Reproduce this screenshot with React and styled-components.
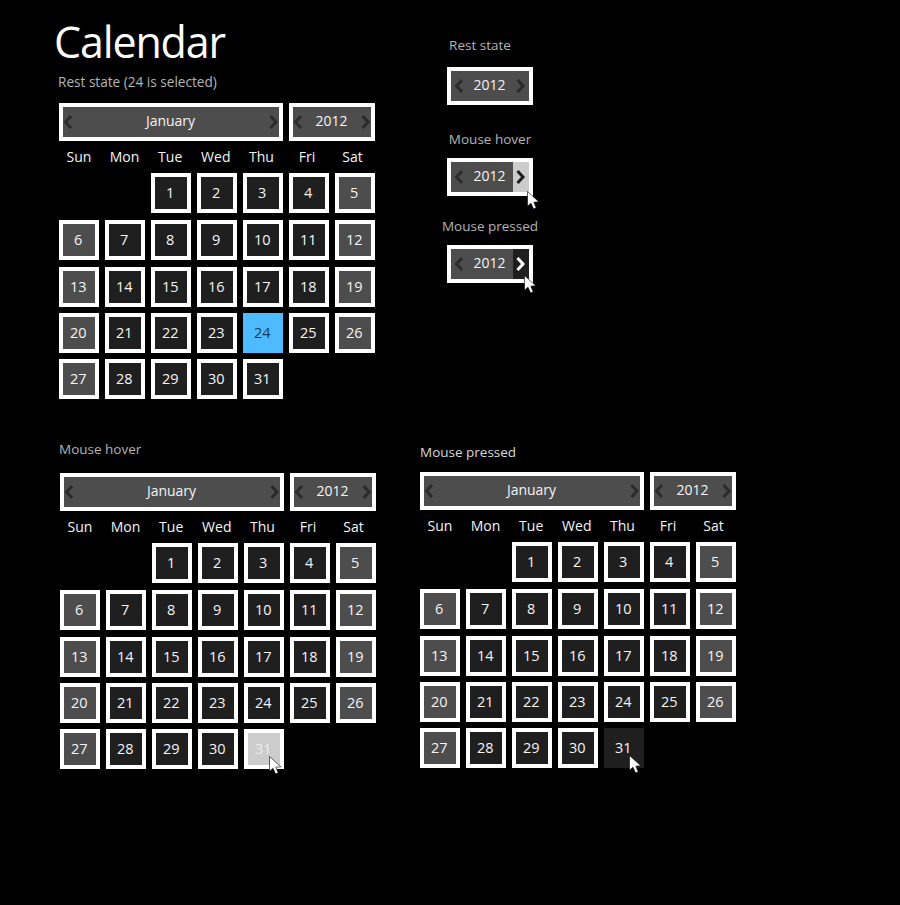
import React from "react";
import styled, { createGlobalStyle } from "styled-components";

const Global = createGlobalStyle`
  html, body { margin: 0; padding: 0; background: #000; }
  body { font-family: "Open Sans", "Noto Sans", "Liberation Sans", sans-serif; color: #fff; }
`;

const Page = styled.div`
  width: 900px;
  height: 905px;
  background: #000;
  overflow: hidden;
  display: flex;
  flex-direction: column;
`;
const TopRow = styled.section`
  display: flex;
  height: 439px;
  padding-left: 59px;
`;
const LeftColumn = styled.div`
  width: 388px;
  display: flex;
  flex-direction: column;
`;
const Title = styled.h1`
  margin: 14px 0 0 -5px;
  height: 56px;
  line-height: 56px;
  font-size: 43px;
  font-weight: 400;
  letter-spacing: -1.15px;
  color: #fff;
`;
const Caption = styled.div`
  height: 20px;
  line-height: 20px;
  font-size: 13.5px;
  color: ${p => p.$bright ? "#d8d8d8" : "#b4b4b4"};
  white-space: nowrap;
  margin-right: ${p => p.$shift || 0}px;
`;
const SubCaption = styled(Caption)`
  margin-bottom: 11px;
  margin-left: -1px;
  margin-top: 2px;
  font-size: 13.6px;
`;
const SpinnerColumn = styled.div`
  width: 86px;
  padding-top: 35px;
  display: flex;
  flex-direction: column;
  align-items: center;
`;
const SpinnerGroup = styled.div`
  display: flex;
  flex-direction: column;
  align-items: center;
  gap: ${p => p.$gap}px;
  margin-bottom: ${p => p.$after}px;
`;
const BottomRow = styled.section`
  display: flex;
  padding-left: 59px;
`;
const BottomColumn = styled.div`
  width: ${p => p.$width}px;
  display: flex;
  flex-direction: column;
  padding-top: ${p => p.$top}px;
`;
const CalendarBox = styled.div`
  width: 316px;
  margin-top: ${p => p.$top || 0}px;
  margin-left: ${p => p.$left || 0}px;
`;
const Header = styled.div`
  display: flex;
  gap: 6px;
`;
const Spinner = styled.div`
  position: relative;
  box-sizing: border-box;
  width: ${p => p.$wide ? 224 : 86}px;
  height: 38px;
  border: 4px solid #fff;
  background: #4d4d4d;
  display: flex;
  align-items: stretch;
`;
const SpinButton = styled.div`
  width: ${p => p.$wide ? 12 : 16}px;
  flex: none;
  display: flex;
  align-items: center;
  justify-content: ${p => p.$snug ? p.$snug : "center"};
  color: ${p => p.$state === "hover" ? "#1f1f1f" : p.$state === "pressed" ? "#fff" : "#2b2b2b"};
  background: ${p => p.$state === "hover" ? "#cccccc" : p.$state === "pressed" ? "#1f1f1f" : "transparent"};
`;
const SpinValue = styled.div`
  flex: 1;
  text-align: center;
  font-size: 14px;
  line-height: 28px;
  color: #f4f4f4;
  padding-right: 1px;
`;
const Weekdays = styled.div`
  display: grid;
  grid-template-columns: repeat(7, 40px);
  column-gap: 5.6px;
  height: 32px;
`;
const Weekday = styled.div`
  text-align: center;
  font-size: 14px;
  line-height: 32px;
  color: #f4f4f4;
`;
const Days = styled.div`
  display: grid;
  grid-template-columns: repeat(7, 40px);
  grid-template-rows: 47px 47px 46px 46px 40px;
  column-gap: 6px;
`;
const cellBg = { normal: "#1f1f1f", weekend: "#4d4d4d", selected: "#4ebaff", hover: "#cccccc", pressed: "#1f1f1f" };
const Day = styled.div`
  position: relative;
  box-sizing: border-box;
  height: 40px;
  grid-column: ${p => p.$col || "auto"};
  border: 4px solid ${p => (p.$kind === "selected" || p.$kind === "pressed") ? cellBg[p.$kind] : "#fff"};
  background: ${p => cellBg[p.$kind]};
  color: ${p => p.$kind === "selected" ? "#123a55" : p.$kind === "hover" ? "#ececec" : "#f4f4f4"};
  font-size: 14.5px;
  display: flex;
  align-items: center;
  justify-content: center;
  padding: 0 1.5px 1px 0;
`;
const CursorMark = styled.svg`
  position: absolute;
  left: ${p => p.$left}px;
  top: ${p => p.$top}px;
  width: 13px;
  height: 19px;
  z-index: 2;
`;

const Cursor = ({ left, top }) => (
  <CursorMark $left={left} $top={top} viewBox="0 0 13 19">
    <path d="M0.5 0.5 L0.5 15.2 L4 12.2 L6.6 18 L9.2 16.8 L6.8 11.2 L11.8 10.8 Z" fill="#fff" stroke="#000" strokeWidth="0.6" />
  </CursorMark>
);

const Chevron = ({ dir, weight = 3 }) => (
  <svg width="10" height="16" viewBox="0 0 10 16">
    <path d={dir === "left" ? "M8 2 L2.5 8 L8 14" : "M1.5 2 L7 8 L1.5 14"} fill="none" stroke="currentColor" strokeWidth={weight} />
  </svg>
);

const MonthYear = ({ wide, value, state, cursor, snug }) => (
  <Spinner $wide={wide}>
    <SpinButton $wide={wide} $snug={snug && "flex-start"}><Chevron dir="left" /></SpinButton>
    <SpinValue>{value}</SpinValue>
    <SpinButton $wide={wide} $state={state} $snug={snug && "flex-end"}><Chevron dir="right" /></SpinButton>
    {cursor && <Cursor left={cursor[0]} top={cursor[1]} />}
  </Spinner>
);

const names = ["Sun", "Mon", "Tue", "Wed", "Thu", "Fri", "Sat"];
const days = Array.from({ length: 31 }, (_, i) => i + 1);

const Calendar = ({ selected, hovered, pressed, top, left }) => (
  <CalendarBox $top={top} $left={left}>
    <Header>
      <MonthYear wide snug value="January" />
      <MonthYear snug value="2012" />
    </Header>
    <Weekdays>
      {names.map(n => <Weekday key={n}>{n}</Weekday>)}
    </Weekdays>
    <Days>
      {days.map(d => {
        const col = (d + 2) % 7;
        const weekend = col === 0 || col === 1;
        const kind = d === selected ? "selected" : d === hovered ? "hover" : d === pressed ? "pressed" : weekend ? "weekend" : "normal";
        return (
          <Day key={d} $kind={kind} $col={d === 1 ? 3 : undefined}>
            {d}
            {(d === hovered || d === pressed) && <Cursor left={21} top={23} />}
          </Day>
        );
      })}
    </Days>
  </CalendarBox>
);

export default function App() {
  return (
    <Page>
      <Global />
      <TopRow>
        <LeftColumn>
          <Title>Calendar</Title>
          <SubCaption>Rest state (24 is selected)</SubCaption>
          <Calendar selected={24} />
        </LeftColumn>
        <SpinnerColumn>
          <SpinnerGroup $gap={12} $after={24}>
            <Caption $shift={20}>Rest state</Caption>
            <MonthYear value="2012" />
          </SpinnerGroup>
          <SpinnerGroup $gap={9} $after={20}>
            <Caption>Mouse hover</Caption>
            <MonthYear value="2012" state="hover" cursor={[76, 29]} />
          </SpinnerGroup>
          <SpinnerGroup $gap={9} $after={0}>
            <Caption>Mouse pressed</Caption>
            <MonthYear value="2012" state="pressed" cursor={[73, 26]} />
          </SpinnerGroup>
        </SpinnerColumn>
      </TopRow>
      <BottomRow>
        <BottomColumn $width={361} $top={0}>
          <Caption>Mouse hover</Caption>
          <Calendar hovered={31} top={14} left={1} />
        </BottomColumn>
        <BottomColumn $width={320} $top={3}>
          <Caption $bright>Mouse pressed</Caption>
          <Calendar pressed={31} top={10} />
        </BottomColumn>
      </BottomRow>
    </Page>
  );
}
